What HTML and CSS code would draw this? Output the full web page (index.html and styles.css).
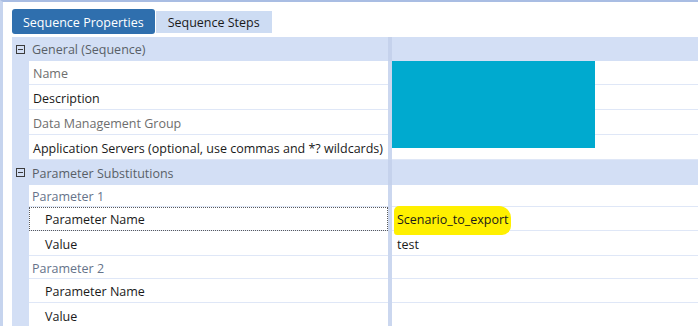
FILE: index.html
```html
<!DOCTYPE html>
<html>
<head>
<meta charset="utf-8">
<link rel="stylesheet" href="styles.css">
</head>
<body>
<div class="window">
  <div class="tabs">
    <div class="tab active">Sequence Properties</div>
    <div class="tab">Sequence Steps</div>
  </div>
  <div class="grid">
    <div class="row cat">
      <div class="gutter"><span class="toggle"></span></div>
      <div class="label">General (Sequence)</div>
      <div class="split"></div>
      <div class="value"></div>
    </div>
    <div class="row h24">
      <div class="gutter"></div>
      <div class="label dim">Name</div>
      <div class="split"></div>
      <div class="value"></div>
    </div>
    <div class="row">
      <div class="gutter"></div>
      <div class="label">Description</div>
      <div class="split"></div>
      <div class="value"></div>
    </div>
    <div class="row">
      <div class="gutter"></div>
      <div class="label dim">Data Management Group</div>
      <div class="split"></div>
      <div class="value"></div>
    </div>
    <div class="row">
      <div class="gutter"></div>
      <div class="label">Application Servers (optional, use commas and *? wildcards)</div>
      <div class="split"></div>
      <div class="value"></div>
    </div>
    <div class="row cat h25">
      <div class="gutter"><span class="toggle"></span></div>
      <div class="label">Parameter Substitutions</div>
      <div class="split"></div>
      <div class="value"></div>
    </div>
    <div class="row h22">
      <div class="gutter"></div>
      <div class="label group">Parameter 1</div>
      <div class="split"></div>
      <div class="value"></div>
    </div>
    <div class="row h24">
      <div class="gutter"></div>
      <div class="label sub focus">Parameter Name</div>
      <div class="split"></div>
      <div class="value"><span class="marker">Scenario_to_export</span></div>
    </div>
    <div class="row">
      <div class="gutter"></div>
      <div class="label sub">Value</div>
      <div class="split"></div>
      <div class="value">test</div>
    </div>
    <div class="row h23">
      <div class="gutter"></div>
      <div class="label group">Parameter 2</div>
      <div class="split"></div>
      <div class="value"></div>
    </div>
    <div class="row h24">
      <div class="gutter"></div>
      <div class="label sub">Parameter Name</div>
      <div class="split"></div>
      <div class="value"></div>
    </div>
    <div class="row">
      <div class="gutter"></div>
      <div class="label sub">Value</div>
      <div class="split"></div>
      <div class="value"></div>
    </div>
    <div class="redact"></div>
  </div>
</div>
</body>
</html>
```

FILE: styles.css
```css
html, body {
  margin: 0;
  padding: 0;
  overflow: hidden;
  background: #ffffff;
}
body {
  font-family: "Open Sans", "Noto Sans", "Liberation Sans", sans-serif;
  font-size: 12.5px;
  color: #1a1a1a;
}
.window {
  height: 324px;
  border-top: 2px solid #a9bde3;
  border-left: 3px solid #c6d4ee;
  padding-left: 9px;
  overflow: hidden;
}
.tabs {
  display: flex;
  align-items: flex-start;
  padding-top: 7px;
  height: 28px;
  gap: 1px;
}
.tab {
  height: 22px;
  margin-top: 2px;
  padding: 1px 12px 0 12px;
  box-sizing: border-box;
  display: flex;
  align-items: center;
  background: #cddcf3;
  color: #1a1a1a;
  white-space: nowrap;
}
.tab.active {
  height: 25px;
  margin-top: 0;
  padding: 1px 11px 0 11px;
  background: #2f6fae;
  color: #ffffff;
  border-radius: 3px;
}
.grid {
  position: relative;
}
.row {
  display: grid;
  grid-template-columns: 17px 359px 4px 1fr;
  grid-template-rows: 100%;
  height: 25px;
}
.row.h22 { height: 22px; }
.row.h23 { height: 23px; }
.row.h24 { height: 24px; }
.row.h25 { height: 25px; }
.row.cat { height: 24px; background: #d3dff5; }
.row.cat.h25 { height: 25px; }
.gutter {
  background: #d3dff5;
  display: flex;
  align-items: center;
  justify-content: center;
}
.label, .value {
  display: flex;
  align-items: center;
  white-space: nowrap;
  background: #ffffff;
  border-bottom: 1px solid #dfe7f7;
  box-sizing: border-box;
  padding-top: 2px;
  min-height: 0;
}
.label { padding-left: 4px; overflow: hidden; }
.value { padding-left: 5px; }
.cat .label, .cat .value {
  background: transparent;
  border-bottom: none;
  color: #595f68;
  padding-left: 3px;
  padding-top: 1px;
}
.split { background: #cbd7ef; }
.cat .split { background: #c5d2ec; }
.label.dim { color: #6e6e6e; }
.label.group { color: #66738a; padding-left: 3px; }
.label.sub { padding-left: 16px; }
.label.focus {
  outline: 1px dotted #5a5a5a;
  outline-offset: -1px;
}
.toggle {
  width: 7px;
  height: 7px;
  border: 1px solid #3c3c3c;
  position: relative;
  margin-left: -1px;
  box-sizing: content-box;
}
.toggle::after {
  content: "";
  position: absolute;
  left: 1px;
  right: 1px;
  top: 3px;
  height: 1px;
  background: #3c3c3c;
}
.marker {
  position: relative;
  z-index: 1;
  background: #fff000;
  margin: -5px 0 -7px -3px;
  padding: 5px 3px 7px 3px;
  border-radius: 5px 12px 9px 3px;
}
.redact {
  position: absolute;
  left: 380px;
  top: 24px;
  width: 203px;
  height: 87px;
  background: #00aacf;
}
```
